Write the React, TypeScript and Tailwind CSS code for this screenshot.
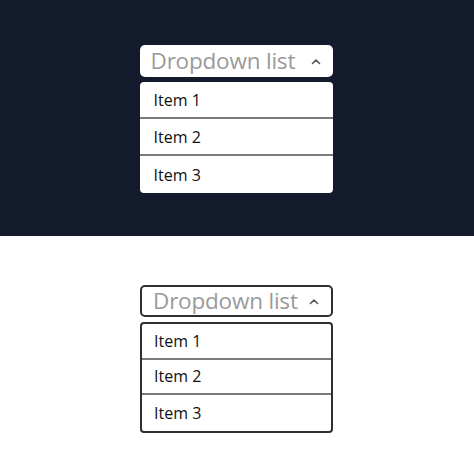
import React from 'react';

const items = ['Item 1', 'Item 2', 'Item 3'];

const Chevron = () => (
  <svg width="12" height="8" viewBox="0 0 12 8" fill="none">
    <path d="M2.5 6.5 L6 3 L9.5 6.5" stroke="#555" strokeWidth="1.6" strokeLinecap="round" strokeLinejoin="round" />
  </svg>
);

const Dropdown: React.FC<{ outlined?: boolean }> = ({ outlined }) => {
  const border = outlined ? 'border-2 border-[#2f2f2f]' : '';
  const rowCls = outlined ? 'h-[35.5px] pl-[12px]' : 'h-[37px] pl-[14px]';
  return (
    <div className="w-[193px] flex flex-col gap-[5px]">
      <div className={`h-[32px] bg-white rounded-[5px] flex items-center justify-between pl-[11px] pr-[11px] ${border}`}>
        <span className="text-[22.5px] text-[#9a9a9a] leading-none tracking-[-0.2px]">Dropdown list</span>
        <Chevron />
      </div>
      <div className={`bg-white rounded-[4px] flex flex-col overflow-hidden ${border}`}>
        {items.map((item, i) => (
          <div
            key={item}
            className={`${rowCls} flex items-center text-[16px] text-[#111] ${
              i < items.length - 1 ? 'border-b-2 border-[#7a7a7a]' : ''
            }`}
          >
            {item}
          </div>
        ))}
      </div>
    </div>
  );
};

export default function App() {
  return (
    <div className="w-[474px] h-[474px] flex flex-col" style={{ fontFamily: '"Open Sans", "Noto Sans", sans-serif' }}>
      <div className="h-[236px] bg-[#131a2b] flex justify-center pt-[45px]">
        <div className="ml-[-2px]">
          <Dropdown />
        </div>
      </div>
      <div className="h-[238px] bg-white flex justify-center pt-[49px]">
        <div className="ml-[-1px]">
          <Dropdown outlined />
        </div>
      </div>
    </div>
  );
}
